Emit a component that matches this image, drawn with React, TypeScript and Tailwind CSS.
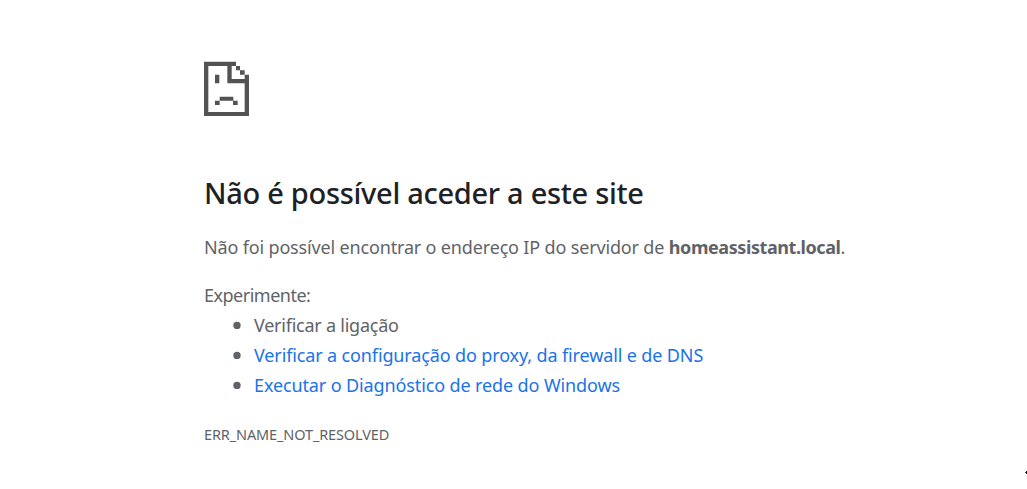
import React from "react";

const suggestions = [
  { text: "Verificar a ligação", link: false, tracking: "tracking-[-0.24px]" },
  { text: "Verificar a configuração do proxy, da firewall e de DNS", link: true, tracking: "tracking-[-0.13px]" },
  { text: "Executar o Diagnóstico de rede do Windows", link: true, tracking: "tracking-[-0.12px]" },
];

function SadPageIcon() {
  return (
    <svg width="45" height="55" viewBox="24 21 135 165" fill="#535353">
      {/* page outline */}
      <path d="M24 23H120V36H37V174H146V88H94V24H107V75H146V62H159V186H24Z" />
      {/* folded corner */}
      <path d="M120 36h12v13h14v13h-14V49h-12z" />
      {/* face */}
      <path d="M57 62h13v26H57zM71 128h41v12H71zM57 140h14v13H57zM111 140h14v13h-14z" />
    </svg>
  );
}

export default function App() {
  return (
    <div className="relative h-[489px] overflow-hidden bg-white pl-[204px] pt-[61px] font-['Noto_Sans','Open_Sans',sans-serif] text-[18px] leading-[30px] text-[#5f6368]">
      <SadPageIcon />

      {/* HEADING */}
      <h1 className="mt-[59px] whitespace-nowrap text-[29px] font-medium leading-[36px] tracking-[-0.29px] text-[#202124]">
        Não é possível aceder a este site
      </h1>

      <p className="mt-[21px] whitespace-nowrap tracking-[-0.16px]">
        Não foi possível encontrar o endereço IP do servidor de{" "}
        <strong className="font-bold tracking-[-0.42px]">homeassistant.local</strong>.
      </p>

      {/* SUGGESTIONS */}
      <p className="mt-[18px] tracking-[-0.5px]">Experimente:</p>
      <ul>
        {suggestions.map((item) => (
          <li key={item.text} className="flex items-center whitespace-nowrap pl-[29px]">
            <svg className="mr-[13px] size-2" viewBox="0 0 8 8" fill="#5f6368">
              <circle cx="4" cy="4.5" r="3.7" />
            </svg>
            {item.link ? (
              <a href="#" className={`text-[#1a73e8] ${item.tracking}`}>{item.text}</a>
            ) : (
              <span className={item.tracking}>{item.text}</span>
            )}
          </li>
        ))}
      </ul>

      {/* ERROR CODE */}
      <div className="mt-[22px] text-[14.5px] leading-[24px] tracking-[-0.13px]">
        ERR_NAME_NOT_RESOLVED
      </div>

      {/* tip of the pointer at the window edge */}
      <svg className="absolute right-0 top-[471px]" width="2" height="3">
        <path d="M1 0h1v3h-1z" fill="#111" />
        <path d="M0 1h1v1H0z" fill="#444" />
      </svg>
    </div>
  );
}
